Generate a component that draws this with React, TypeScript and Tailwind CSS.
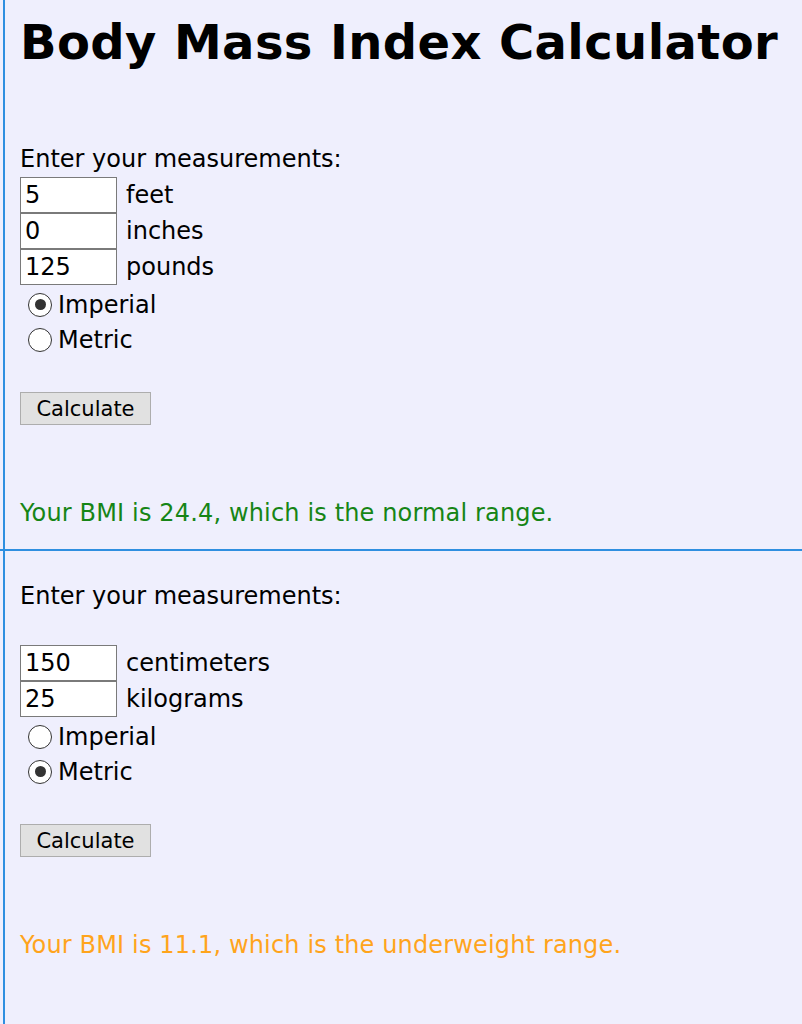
import React from 'react';

type Field = { value: string; unit: string };

function Radio({ checked, label }: { checked: boolean; label: string }) {
  return (
    <div className="flex items-center h-[35px] pl-[8px]">
      <span className="w-[24px] h-[24px] rounded-full border-[1.5px] border-[#333] bg-white flex items-center justify-center">
        {checked && <span className="w-[11px] h-[11px] rounded-full bg-[#333]" />}
      </span>
      <span className="ml-[6px]">{label}</span>
    </div>
  );
}

function Form({ fields, metric, result, resultColor, gap }: {
  fields: Field[];
  metric: boolean;
  result: string;
  resultColor: string;
  gap: string;
}) {
  return (
    <div className="flex flex-col">
      <div className="h-[36px] leading-[36px]">Enter your measurements:</div>
      <div className={gap} />
      {fields.map((f) => (
        <div key={f.unit} className="flex items-center h-[36px]">
          <div className="w-[97px] h-[36px] bg-white border border-[#7a7a7a] pl-[4px] leading-[34px]">{f.value}</div>
          <span className="ml-[9px]">{f.unit}</span>
        </div>
      ))}
      <div className="h-[2px]" />
      <Radio checked={!metric} label="Imperial" />
      <Radio checked={metric} label="Metric" />
      <div className="h-[35px]" />
      <button className="w-[131px] h-[33px] bg-[#e1e1e1] border border-[#adadad] text-black text-center text-[21px] leading-[30px]">
        Calculate
      </button>
      <div className="h-[70px]" />
      <div className={`${resultColor} tracking-[0.15px]`}>{result}</div>
    </div>
  );
}

export default function App() {
  return (
    <div className="min-h-screen bg-[#efeffd] text-[24px] text-black font-['DejaVu_Sans',sans-serif]">
      <section className="ml-[3px] border-l-2 border-[#2f8fe0] h-[549px] pl-[15px] pt-[10px]">
        <h1 className="font-bold text-[48px] leading-[64px] tracking-[0.4px]">Body Mass Index Calculator</h1>
        <div className="h-[67px]" />
        <Form
          fields={[
            { value: '5', unit: 'feet' },
            { value: '0', unit: 'inches' },
            { value: '125', unit: 'pounds' },
          ]}
          metric={false}
          result="Your BMI is 24.4, which is the normal range."
          resultColor="text-[#168516]"
          gap="h-0"
        />
      </section>
      <div className="h-[2px] bg-[#2f8fe0]" />
      <section className="ml-[3px] border-l-2 border-[#2f8fe0] h-[473px] pl-[15px] pt-[27px]">
        <Form
          fields={[
            { value: '150', unit: 'centimeters' },
            { value: '25', unit: 'kilograms' },
          ]}
          metric={true}
          result="Your BMI is 11.1, which is the underweight range."
          resultColor="text-[#ffa41c]"
          gap="h-[31px]"
        />
      </section>
    </div>
  );
}
